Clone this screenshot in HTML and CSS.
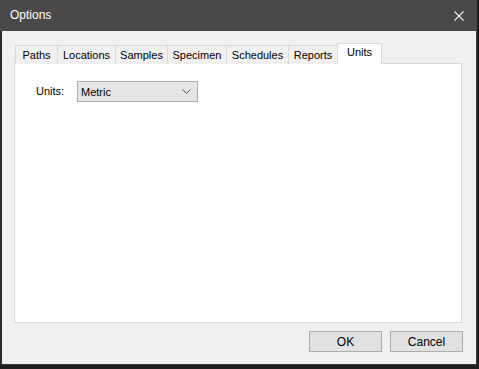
FILE: index.html
```html
<!DOCTYPE html>
<html lang="en">
<head>
    <meta charset="UTF-8">
    <title>Options</title>
    <link rel="stylesheet" href="styles.css">
</head>
<body>

<div class="window">
    <div class="title-bar">
        <span class="title">Options</span>
        <svg class="close" width="10" height="10" viewBox="0 0 10 10">
            <path d="M0.5 0.5 L9.5 9.5 M9.5 0.5 L0.5 9.5" stroke="#f2f2f2" stroke-width="1.1" fill="none"/>
        </svg>
    </div>
    <div class="content">
        <div class="tabs">
            <div class="tab tab-paths">Paths</div>
            <div class="tab tab-locations">Locations</div>
            <div class="tab tab-samples">Samples</div>
            <div class="tab tab-specimen">Specimen</div>
            <div class="tab tab-schedules">Schedules</div>
            <div class="tab tab-reports">Reports</div>
            <div class="tab tab-units selected">Units</div>
        </div>
        <div class="panel">
            <div class="field">
                <label for="units">Units:</label>
                <div class="combo" id="units">
                    <span>Metric</span>
                    <svg width="9" height="5" viewBox="0 0 9 5">
                        <path d="M0.5 0.5 L4.5 4.5 L8.5 0.5" stroke="#555" stroke-width="1" fill="none"/>
                    </svg>
                </div>
            </div>
        </div>
        <div class="buttons">
            <button class="btn">OK</button>
            <button class="btn">Cancel</button>
        </div>
    </div>
</div>

</body>
</html>
```

FILE: styles.css
```css
body {
    margin: 0;
    padding: 0;
    background-color: #1e1e1e;
    font-family: "Liberation Sans", Arial, sans-serif;
    font-size: 11px;
    color: #000;
}
.window {
    width: 477px;
    height: 365px;
}
.title-bar {
    height: 31px;
    background-color: #4a4947;
    display: flex;
    align-items: center;
    justify-content: space-between;
    padding: 0 12px 0 10px;
    box-sizing: border-box;
}
.title {
    color: #ffffff;
    font-size: 12px;
    margin-top: -1px;
}
.close {
    margin-right: 1px;
}
.content {
    height: 334px;
    background-color: #f0f0f0;
    border-left: 2px solid #2c2c2c;
    border-right: 1px solid #3a3a3a;
    border-bottom: 1px solid #3a3a3a;
    box-sizing: border-box;
    padding: 12px 14px 0 12px;
}
.tabs {
    display: flex;
    align-items: flex-end;
    height: 21px;
    margin-bottom: -1px;
    padding-left: 1px;
    position: relative;
}
.tab {
    height: 19px;
    box-sizing: border-box;
    border: 1px solid #d9d9d9;
    border-bottom: none;
    margin-left: -1px;
    text-align: center;
    line-height: 19px;
    background-color: #f0f0f0;
}
.tab:first-child {
    margin-left: 0;
}
.tab-paths { width: 43px; }
.tab-locations { width: 59px; }
.tab-samples { width: 53px; }
.tab-specimen { width: 60px; }
.tab-schedules { width: 63px; }
.tab-reports { width: 50px; }
.tab-units { width: 45px; }
.tab.selected {
    height: 21px;
    background-color: #ffffff;
    line-height: 17px;
    position: relative;
}
.panel {
    height: 260px;
    background-color: #ffffff;
    border: 1px solid #d9d9d9;
    box-sizing: border-box;
}
.field {
    display: flex;
    align-items: center;
    padding: 17px 0 0 21px;
}
.field label {
    width: 41px;
    margin-top: -1px;
}
.combo {
    width: 121px;
    height: 21px;
    box-sizing: border-box;
    border: 1px solid #adadad;
    background-color: #e5e5e5;
    display: flex;
    align-items: center;
    justify-content: space-between;
    padding: 0 6px 0 3px;
}
.buttons {
    display: flex;
    justify-content: flex-end;
    gap: 8px;
    padding-top: 8px;
    margin-right: -1px;
}
.btn {
    width: 73px;
    height: 21px;
    border: 1px solid #adadad;
    background-color: #e1e1e1;
    font-family: "Liberation Sans", Arial, sans-serif;
    font-size: 12px;
    padding: 0;
    color: #000;
}
```
